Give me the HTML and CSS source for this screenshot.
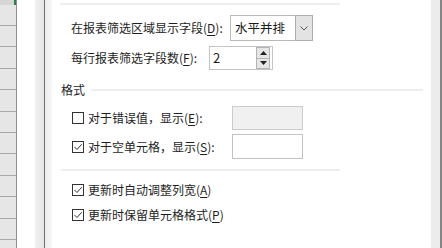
FILE: index.html
```html
<!DOCTYPE html>
<html lang="zh-CN">
<head>
<meta charset="utf-8">
<link rel="stylesheet" href="styles.css">
</head>
<body>
<div class="screen">
  <div class="sheet">
    <div class="sel"></div>
    <div class="cell first"></div>
    <div class="cell"></div><div class="cell"></div><div class="cell"></div>
    <div class="cell"></div><div class="cell"></div><div class="cell"></div>
    <div class="cell"></div><div class="cell"></div><div class="cell"></div>
    <div class="cell"></div>
  </div>
  <div class="gap"></div>
  <div class="shade"></div>
  <div class="edge"></div>
  <div class="inner"></div>
  <div class="dialog">
    <div class="topline"></div>

    <div class="row r1">
      <span class="label w1">在报表筛选区域显示字段(<u>D</u>):</span>
      <div class="combo">
        <div class="combo-text">水平并排</div>
        <div class="combo-btn">
          <svg width="8" height="5" viewBox="0 0 8 5"><path d="M0.5 0.5 L4 4 L7.5 0.5" fill="none" stroke="#555" stroke-width="1"/></svg>
        </div>
      </div>
    </div>

    <div class="row r2">
      <span class="label w2">每行报表筛选字段数(<u>F</u>):</span>
      <div class="spin">
        <div class="spin-text">2</div>
        <div class="spin-btns">
          <div class="spin-btn"><svg width="7" height="4" viewBox="0 0 7 4"><path d="M0 4 L3.5 0 L7 4 Z" fill="#222"/></svg></div>
          <div class="spin-btn"><svg width="7" height="4" viewBox="0 0 7 4"><path d="M0 0 L3.5 4 L7 0 Z" fill="#222"/></svg></div>
        </div>
      </div>
    </div>

    <div class="group">
      <span class="group-title">格式</span>
      <div class="group-line"></div>
    </div>

    <div class="crow c1">
      <span class="box"></span>
      <span class="label w3">对于错误值，显示(<u>E</u>):</span>
      <div class="field disabled"></div>
    </div>

    <div class="crow c2">
      <span class="box"><svg width="10" height="10" viewBox="0 0 10 10"><path d="M1.5 5 L4 7.5 L8.8 2.2" fill="none" stroke="#333" stroke-width="1"/></svg></span>
      <span class="label w3">对于空单元格，显示(<u>S</u>):</span>
      <div class="field"></div>
    </div>

    <div class="sep"></div>

    <div class="crow c3">
      <span class="box"><svg width="10" height="10" viewBox="0 0 10 10"><path d="M1.5 5 L4 7.5 L8.8 2.2" fill="none" stroke="#333" stroke-width="1"/></svg></span>
      <span class="label">更新时自动调整列宽(<u>A</u>)</span>
    </div>

    <div class="crow c4">
      <span class="box"><svg width="10" height="10" viewBox="0 0 10 10"><path d="M1.5 5 L4 7.5 L8.8 2.2" fill="none" stroke="#333" stroke-width="1"/></svg></span>
      <span class="label">更新时保留单元格格式(<u>P</u>)</span>
    </div>
  </div>
  <div class="rshade"></div>
  <div class="redge"></div>
</div>
</body>
</html>
```

FILE: styles.css
```css
html, body {
  margin: 0;
  padding: 0;
  background: #ffffff;
}
.screen {
  width: 442px;
  height: 248px;
  display: flex;
  overflow: hidden;
  font-family: "Noto Sans CJK SC", "Microsoft YaHei", sans-serif;
  font-size: 12px;
  color: #1e1e1e;
}
.sheet {
  width: 16px;
  flex: none;
  background: #e6e6e6;
  border-right: 1px solid #8f8f8f;
  display: flex;
  flex-direction: column;
}
.sel {
  height: 5px;
  flex: none;
  background: #d6d6d6;
  box-shadow: inset -2px 0 0 #2f7d4f;
}
.cell {
  height: 20.4px;
  flex: none;
  border-bottom: 1px solid #a8a8a8;
}
.cell.first {
  height: 20px;
}
.gap {
  width: 18px;
  flex: none;
  background: #ffffff;
}
.shade {
  width: 9px;
  flex: none;
  background: linear-gradient(to right, #f1f1f1, #e4e4e4);
}
.edge {
  width: 1px;
  flex: none;
  background: #707070;
}
.inner {
  width: 7px;
  flex: none;
  background: linear-gradient(to right, #ececec, #f7f7f7);
}
.dialog {
  flex: 1;
  background: #ffffff;
  display: flex;
  flex-direction: column;
}
.topline {
  margin: 3px 0 0 8px;
  width: 280px;
  height: 2px;
  background: #eeeeee;
}
.row {
  display: flex;
  align-items: center;
  padding-left: 19px;
}
.r1 {
  margin-top: 10px;
  height: 26px;
}
.r2 {
  margin-top: 5px;
  height: 24px;
}
.label {
  white-space: nowrap;
  line-height: 16px;
}
.label u {
  text-decoration-thickness: 1px;
  text-underline-offset: 2px;
}
.w1 { width: 159px; flex: none; }
.w2 { width: 138px; flex: none; }
.w3 { width: 144px; flex: none; }
.combo {
  display: flex;
  height: 26px;
}
.combo-text {
  width: 60px;
  border: 1px solid #b9b9b9;
  border-right: none;
  padding-left: 4px;
  line-height: 24px;
  font-size: 12.5px;
  color: #1a1a1a;
}
.combo-btn {
  width: 16px;
  background: #e3e3e3;
  border: 1px solid #adadad;
  display: flex;
  align-items: center;
  justify-content: center;
}
.spin {
  display: flex;
  width: 64px;
  height: 24px;
  box-sizing: border-box;
  border: 1px solid #c4c4c4;
}
.spin-text {
  flex: 1;
  padding-left: 3px;
  line-height: 22px;
  font-size: 13px;
}
.spin-btns {
  width: 14px;
  margin: 0 2px 0 0;
  display: flex;
  flex-direction: column;
}
.spin-btn {
  flex: 1;
  background: #e6e6e6;
  border: 1px solid #b4b4b4;
  display: flex;
  align-items: center;
  justify-content: center;
}
.spin-btn + .spin-btn {
  border-top: none;
}
.group {
  margin-top: 12px;
  height: 16px;
  display: flex;
  align-items: center;
  padding-left: 9px;
}
.group-title {
  line-height: 16px;
}
.group-line {
  flex: 1;
  height: 2px;
  background: #eeeeee;
  margin-left: 6px;
  margin-right: 8px;
}
.crow {
  display: flex;
  align-items: center;
  padding-left: 20px;
}
.c1 { margin-top: 8px; height: 24px; }
.c2 { margin-top: 4px; height: 25px; }
.c3 { margin-top: 9px; height: 20px; }
.c4 { margin-top: 5px; height: 20px; }
.box {
  width: 12px;
  height: 12px;
  box-sizing: border-box;
  border: 1px solid #333333;
  background: #ffffff;
  margin-right: 4px;
  flex: none;
  display: flex;
  align-items: center;
  justify-content: center;
}
.field {
  width: 71px;
  height: 100%;
  box-sizing: border-box;
  border: 1px solid #c2c2c2;
  background: #ffffff;
}
.field.disabled {
  background: #f0f0f0;
  border-color: #cccccc;
}
.sep {
  margin: 10px 0 0 9px;
  width: 279px;
  height: 2px;
  background: #eeeeee;
}
.rshade {
  width: 9px;
  flex: none;
  background: #ececec;
}
.redge {
  width: 2px;
  flex: none;
  background: #858585;
}
```
